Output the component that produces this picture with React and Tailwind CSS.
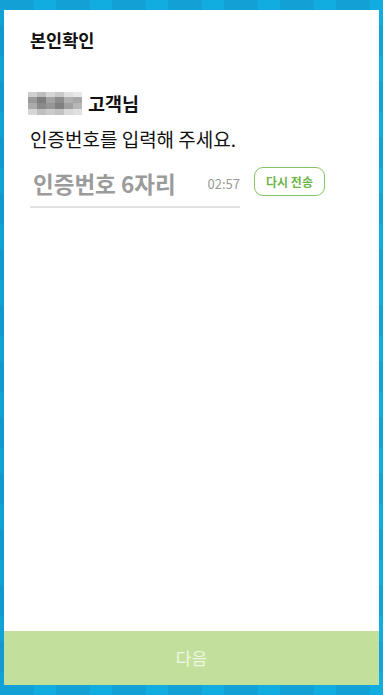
export default function App() {
  const blur = [
    ["#cfcfcf", "#bdbdbd", "#d6d6d6", "#c8c8c8", "#e0e0e0", "#e8e8e8"],
    ["#9a9a9a", "#7e7e7e", "#a3a3a3", "#8c8c8c", "#b0b0b0", "#a8a8a8"],
    ["#ababab", "#8a8a8a", "#969696", "#808080", "#a0a0a0", "#b7b7b7"],
    ["#d6d6d6", "#c0c0c0", "#cbcbcb", "#c2c2c2", "#d9d9d9", "#e0e0e0"],
  ];
  return (
    <div
      className="w-full min-h-[695px] h-[695px] bg-[#12ade0] bg-[linear-gradient(90deg,rgba(20,80,140,0.13)_60%,transparent_60%),linear-gradient(0deg,rgba(20,80,140,0.09)_55%,transparent_55%)] bg-[length:56px_56px] px-[4px] pt-[10px] pb-[10px]"
      style={{ fontFamily: '"Noto Sans CJK KR", "Noto Sans", sans-serif' }}
    >
      <div className="flex h-[675px] w-full flex-col bg-white">
        <div className="flex flex-1 flex-col pl-[26px] pt-[18px]">
          <div className="text-[17.5px] leading-[24px] font-bold text-[#111]">본인확인</div>
          <div className="mt-[39px] flex items-center">
            <div className="ml-[-2px] grid h-[23px] w-[54px] grid-cols-6 grid-rows-4">
              {blur.flat().map((c, i) => (
                <div key={i} style={{ backgroundColor: c }} />
              ))}
            </div>
            <span className="ml-[6px] text-[18.5px] leading-[24px] font-bold text-[#111]">고객님</span>
          </div>
          <div className="mt-[11px] text-[19px] leading-[26px] text-[#111]">인증번호를 입력해 주세요.</div>
          <div className="mt-[11px] flex items-start">
            <div className="flex h-[45px] w-[210px] items-center justify-between border-b-2 border-[#e2e2e2] pl-[3px] pb-[4px]">
              <span className="text-[22.5px] leading-[30px] font-bold text-[#9b9b9b]">인증번호 6자리</span>
              <span className="mt-[2px] text-[13px] leading-[16px] text-[#999]">02:57</span>
            </div>
            <button className="ml-[14px] mt-[4px] flex h-[29px] w-[71px] items-center justify-center rounded-[9px] border border-[#86c465] bg-white text-[12px] font-bold text-[#6db54a]">
              다시 전송
            </button>
          </div>
        </div>
        <button className="flex h-[54px] w-full items-center justify-center bg-[#c2e09c] text-[17px] text-[#eef6e4]">
          다음
        </button>
      </div>
    </div>
  );
}
